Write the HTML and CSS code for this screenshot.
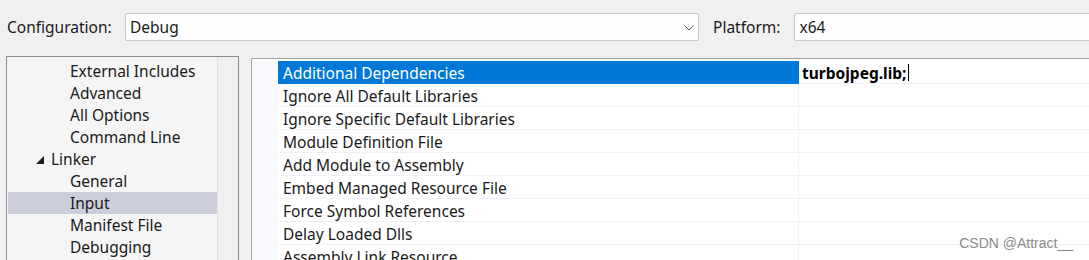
FILE: index.html
```html
<!DOCTYPE html>
<html lang="en">
<head>
  <meta charset="utf-8">
  <title>Property Pages - Linker Input</title>
  <link rel="stylesheet" href="styles.css">
</head>
<body>
  <div class="toolbar">
    <span class="label">Configuration:</span>
    <div class="combo combo-config">
      <span>Debug</span>
      <svg class="chev" width="10" height="6" viewBox="0 0 10 6"><path d="M0.5 0.5 L5 5 L9.5 0.5" fill="none" stroke="#555" stroke-width="1"/></svg>
    </div>
    <span class="label label-plat">Platform:</span>
    <div class="combo combo-plat"><span>x64</span></div>
  </div>

  <div class="main">
    <div class="tree">
      <ul class="tree-list">
        <li class="node child">External Includes</li>
        <li class="node child">Advanced</li>
        <li class="node child">All Options</li>
        <li class="node child">Command Line</li>
        <li class="node parent"><span class="tri"></span>Linker</li>
        <li class="node child">General</li>
        <li class="node child selected">Input</li>
        <li class="node child">Manifest File</li>
        <li class="node child">Debugging</li>
      </ul>
      <div class="scroll">
        <span class="scroll-arrow"></span>
      </div>
    </div>

    <div class="grid">
      <div class="row">
        <div class="gutter"></div>
        <div class="name active">Additional Dependencies</div>
        <div class="value"><b>turbojpeg.lib;</b><span class="caret"></span></div>
      </div>
      <div class="row"><div class="gutter"></div><div class="name">Ignore All Default Libraries</div><div class="value"></div></div>
      <div class="row"><div class="gutter"></div><div class="name">Ignore Specific Default Libraries</div><div class="value"></div></div>
      <div class="row"><div class="gutter"></div><div class="name">Module Definition File</div><div class="value"></div></div>
      <div class="row"><div class="gutter"></div><div class="name">Add Module to Assembly</div><div class="value"></div></div>
      <div class="row"><div class="gutter"></div><div class="name">Embed Managed Resource File</div><div class="value"></div></div>
      <div class="row"><div class="gutter"></div><div class="name">Force Symbol References</div><div class="value"></div></div>
      <div class="row"><div class="gutter"></div><div class="name">Delay Loaded Dlls</div><div class="value"></div></div>
      <div class="row"><div class="gutter"></div><div class="name">Assembly Link Resource</div><div class="value"></div></div>
      <span class="watermark">CSDN @Attract__</span>
    </div>
  </div>
</body>
</html>
```

FILE: styles.css
```css
* {
  box-sizing: border-box;
}

body {
  margin: 0;
  background: #f0f0f0;
  font-family: "Noto Sans", "Open Sans", sans-serif;
  font-size: 15.5px;
  color: #1a1a1a;
  height: 260px;
  overflow: hidden;
}

.toolbar {
  display: flex;
  align-items: center;
  height: 56px;
  padding: 0 0 2px 7px;
}

.label {
  width: 118px;
}

.label-plat {
  width: auto;
  margin: 0 14px 0 14px;
}

.combo {
  height: 28px;
  background: #fdfdfd;
  border: 1px solid #c8c8c8;
  border-radius: 2px;
  display: flex;
  align-items: center;
  padding-left: 4px;
  position: relative;
}

.combo-config {
  width: 574px;
}

.combo-plat {
  flex: 1;
  margin-right: -4px;
}

.chev {
  position: absolute;
  right: 4px;
  top: 11px;
}

.main {
  display: flex;
  padding-left: 6px;
  align-items: flex-start;
}

.tree {
  width: 233px;
  height: 210px;
  border: 1px solid #8b8d96;
  border-bottom: none;
  background: #f5f5f5;
  display: flex;
}

.tree-list {
  list-style: none;
  margin: 0;
  padding: 3px 0 0 1px;
  flex: 1;
}

.node {
  height: 22px;
  line-height: 23px;
  white-space: nowrap;
}

.child {
  padding-left: 62px;
}

.parent {
  padding-left: 43px;
  position: relative;
}

.tri {
  position: absolute;
  left: 28px;
  top: 8px;
  width: 0;
  height: 0;
  border-left: 8px solid transparent;
  border-bottom: 8px solid #1e1e1e;
}

.selected {
  background: #cccedb;
}

.scroll {
  width: 21px;
  background: #f0f0f0;
  border-left: 1px solid #e2e2e2;
  position: relative;
}

.scroll-arrow {
  position: absolute;
  left: 7px;
  bottom: 0;
  width: 8px;
  height: 2px;
  background: #a8a8a8;
}

.grid {
  flex: 1;
  margin: 2px 0 0 12px;
  border-top: 1px solid #a3a3a3;
  border-left: 1px solid #a3a3a3;
  background: #ffffff;
  position: relative;
  padding-top: 2px;
}

.row {
  display: flex;
  height: 23px;
}

.gutter {
  width: 26px;
  background: #f7f9fc;
}

.name {
  width: 521px;
  padding-left: 5px;
  line-height: 24px;
  border-bottom: 1px solid #eef2f8;
  border-right: 1px solid #eef2f8;
  white-space: nowrap;
}

.name.active {
  background: #0078d7;
  color: #ffffff;
  border-color: #0078d7;
}

.value {
  flex: 1;
  padding: 1px 0 0 3px;
  line-height: 22px;
  border-bottom: 1px solid #eef2f8;
  display: flex;
  align-items: center;
  color: #000;
}

.caret {
  width: 1px;
  height: 17px;
  background: #000;
  margin-left: 1px;
}

.watermark {
  position: absolute;
  right: 16px;
  top: 176px;
  font-size: 14px;
  color: #8a8a8a;
  font-family: "Liberation Sans", sans-serif;
}
```
